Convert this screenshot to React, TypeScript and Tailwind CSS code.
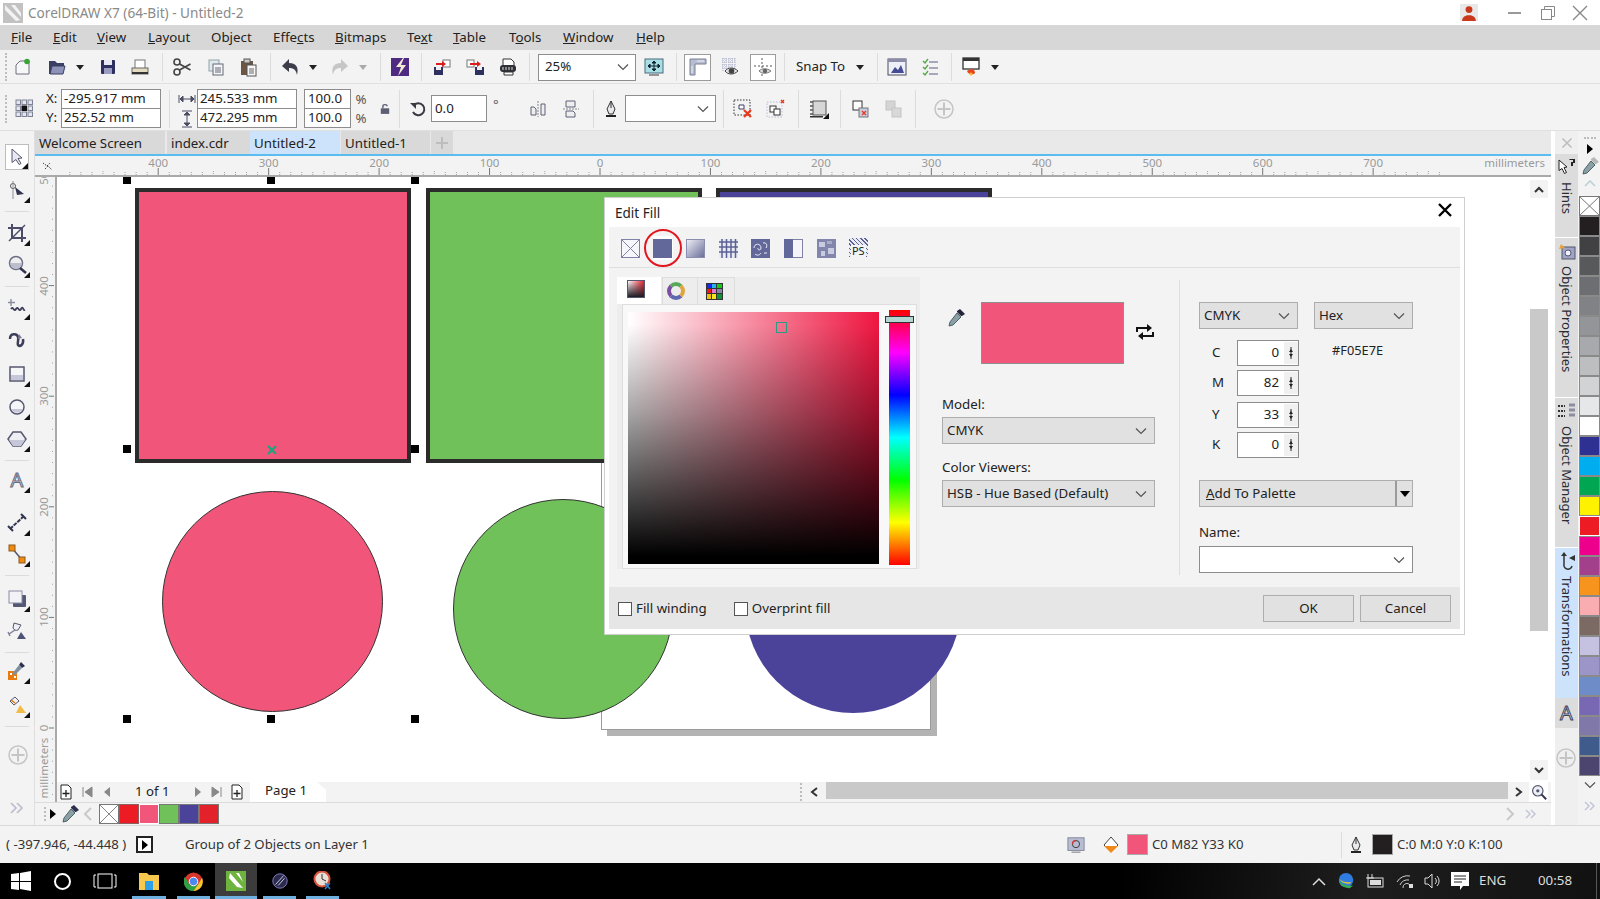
import type { ReactNode } from "react";

const Ico = ({ className = "", size = 20, children }: { className?: string; size?: number; children: ReactNode }) => (
  <svg width={size} height={size} viewBox="0 0 20 20" className={`shrink-0 ${className}`}>
    {children}
  </svg>
);

const Tri = ({ className = "" }: { className?: string }) => (
  <svg width="8" height="5" viewBox="0 0 8 5" className={`shrink-0 ${className}`}>
    <path d="M0 0h8L4 5z" fill="#222" />
  </svg>
);

const Sep = ({ className = "" }: { className?: string }) => <div className={`w-px shrink-0 bg-[#dcdcdc] ${className}`} />;

const Grip = () => <div className="ml-[5px] h-[28px] w-[2px] shrink-0 border-l-2 border-dotted border-[#bdbdbd]" />;

const Chevron = ({ className = "" }: { className?: string }) => (
  <svg width="12" height="8" viewBox="0 0 12 8" className={`shrink-0 ${className}`}>
    <path d="M1 1.5l5 5 5-5" fill="none" stroke="#555" strokeWidth="1.2" />
  </svg>
);

const Corner = () => (
  <svg width="6" height="6" viewBox="0 0 6 6" className="absolute bottom-0 right-0">
    <path d="M6 0v6H0z" fill="#111" />
  </svg>
);

// toolbar icons
const NewDoc = ({ className = "" }) => (
  <Ico className={className}>
    <path d="M4 8l4-4h9v13H4z" fill="#f7f7f7" stroke="#6d6f80" />
    <circle cx="15" cy="4.5" r="2.8" fill="#37a436" />
  </Ico>
);
const OpenIcon = ({ className = "" }) => (
  <Ico className={className}>
    <path d="M2 4h6l2 2h7v3H6l-2 8H2z" fill="#3a3f63" />
    <path d="M5 9h13l-2 8H3z" fill="#8d92b8" stroke="#3a3f63" />
  </Ico>
);
const SaveIcon = ({ className = "" }) => (
  <Ico className={className}>
    <rect x="3" y="3" width="14" height="14" rx="1" fill="#2e3160" />
    <rect x="6" y="3" width="8" height="5" fill="#e9e9f2" />
    <rect x="6" y="11" width="8" height="6" fill="#9a9cc2" />
  </Ico>
);
const PrintIcon = ({ className = "" }) => (
  <Ico className={className}>
    <rect x="5" y="3" width="10" height="9" fill="#fff" stroke="#777" />
    <rect x="2" y="11" width="16" height="6" fill="#e4dcc0" stroke="#666" />
    <rect x="2" y="15" width="16" height="2" fill="#333" />
  </Ico>
);
const Scissors = ({ className = "" }) => (
  <Ico className={className}>
    <circle cx="5" cy="5" r="3" fill="none" stroke="#444" strokeWidth="1.6" />
    <circle cx="5" cy="15" r="3" fill="none" stroke="#444" strokeWidth="1.6" />
    <path d="M7.5 7l11 6M7.5 13l11-6" stroke="#444" strokeWidth="1.6" />
  </Ico>
);
const CopyIcon = ({ className = "" }) => (
  <Ico className={className}>
    <rect x="3" y="3" width="10" height="11" fill="#e0e8ec" stroke="#8fa3a8" />
    <rect x="7" y="7" width="10" height="11" fill="#f5f5f5" stroke="#63697a" />
    <path d="M9 11h6M9 13h6M9 15h6" stroke="#63697a" />
  </Ico>
);
const PasteIcon = ({ className = "" }) => (
  <Ico className={className}>
    <rect x="3" y="4" width="12" height="14" fill="#6b5744" />
    <rect x="6" y="2" width="6" height="4" fill="#c9c9c9" stroke="#555" />
    <rect x="9" y="8" width="9" height="11" fill="#f7f7f7" stroke="#555" />
    <path d="M11 12h5M11 14h5M11 16h5" stroke="#666" />
  </Ico>
);
const UndoIcon = ({ className = "" }) => (
  <Ico className={className}>
    <path d="M8 2L1 9l7 6v-4c4 0 7 1 8 7 2-8-1-12-8-12z" fill="#3b3d4a" />
  </Ico>
);
const RedoIcon = ({ className = "" }) => (
  <Ico className={className}>
    <path d="M12 2l7 7-7 6v-4c-4 0-7 1-8 7-2-8 1-12 8-12z" fill="#c6c6c6" />
  </Ico>
);
const CorelIcon = ({ className = "" }) => (
  <Ico className={className}>
    <rect x="1" y="1" width="18" height="18" fill="#4f2a83" />
    <path d="M13 1L6 10h5l-3 9 8-11h-5l3-7z" fill="#f3ead2" />
  </Ico>
);
const ImportIcon = ({ className = "" }) => (
  <Ico className={className}>
    <rect x="11" y="3" width="7" height="7" fill="#fff" stroke="#777" />
    <rect x="2" y="10" width="9" height="8" fill="#2e3160" />
    <rect x="4" y="10" width="5" height="3" fill="#eee" />
    <path d="M4 6h6V4l4 3-4 3V8H4z" fill="#d81e1e" />
  </Ico>
);
const ExportIcon = ({ className = "" }) => (
  <Ico className={className}>
    <rect x="2" y="3" width="7" height="7" fill="#fff" stroke="#777" />
    <rect x="10" y="10" width="9" height="8" fill="#2e3160" />
    <rect x="12" y="10" width="5" height="3" fill="#eee" />
    <path d="M5 6h7V4l4 3-4 3V8H5z" fill="#d81e1e" />
  </Ico>
);
const PdfIcon = ({ className = "" }) => (
  <Ico className={className}>
    <path d="M5 2h8l3 3v4H5z" fill="#fff" stroke="#333" />
    <rect x="2" y="8" width="16" height="7" rx="3" fill="#2e3036" />
    <path d="M6 15h9v3H6z" fill="#fff" stroke="#333" />
    <path d="M5 10v3M8 10v3M11 10v3M14 10v3" stroke="#ddd" />
  </Ico>
);
const FitIcon = ({ className = "" }) => (
  <Ico className={className}>
    <rect x="1" y="2" width="18" height="14" fill="#a8dfe3" stroke="#4a6b80" />
    <path d="M10 4v10M4 9h12M10 4L8 6h4zM10 14l-2-2h4zM4 9l2-2v4zM16 9l-2-2v4z" stroke="#123" fill="#123" />
    <path d="M5 18h10" stroke="#777" strokeWidth="1.500" />
  </Ico>
);
const RulerIcon = () => (
  <Ico>
    <path d="M2 2h16v5H7v11H2z" fill="#b8bed2" stroke="#7a8094" />
    <path d="M9 4h7M4 9v7" stroke="#eee" />
  </Ico>
);
const GridEye = ({ className = "" }) => (
  <Ico className={className}>
    <path d="M2 2h14M2 5h14M2 8h14M2 11h14M3 1v13M6 1v13M9 1v13M12 1v13M15 1v13" stroke="#a9abc6" strokeDasharray="1 1" />
    <path d="M5 14c3-4 9-4 13 0-4 4-10 4-13 0z" fill="#e6e6e6" stroke="#444" />
    <circle cx="11.500" cy="14" r="2.800" fill="#444" />
  </Ico>
);
const GuideEye = () => (
  <Ico>
    <path d="M9 1v18M1 9h18" stroke="#555" strokeDasharray="2 2" />
    <path d="M6 14c3-3 8-3 12 0-4 3-9 3-12 0z" fill="#ddd" stroke="#777" />
    <circle cx="12" cy="14" r="2.200" fill="#666" />
  </Ico>
);
const OptionsIcon = ({ className = "" }) => (
  <Ico className={className}>
    <rect x="1" y="2" width="18" height="16" fill="#eef0f7" stroke="#4d4d63" />
    <rect x="1" y="2" width="18" height="3" fill="#8b8da8" />
    <path d="M4 16l4-6 3 3 3-5 3 8z" fill="#454b94" />
  </Ico>
);
const CheckList = ({ className = "" }) => (
  <Ico className={className}>
    <path d="M3 4l2 2 3-4M3 10l2 2 3-4M3 16l2 2 3-4" fill="none" stroke="#58a84a" strokeWidth="1.400" />
    <path d="M9 5h9M9 11h9M9 17h9" stroke="#8c8fa8" strokeWidth="1.300" />
  </Ico>
);
const PublishIcon = ({ className = "" }) => (
  <Ico className={className}>
    <rect x="2" y="1" width="16" height="11" fill="#fff" stroke="#333" strokeWidth="1.300" />
    <rect x="2" y="1" width="16" height="3" fill="#333" />
    <path d="M6 14c2-1 2-2 3-2l1 1 2-1c1 1 2 2 2 4-1 2-7 2-8-2z" fill="#e8461c" />
    <circle cx="10" cy="17" r="1.600" fill="#f6b73c" />
  </Ico>
);
const GridNine = ({ className = "" }) => (
  <Ico className={className}>
    {[3, 9, 15].map((x) =>
      [3, 9, 15].map((y) => (
        <rect key={`${x}-${y}`} x={x - 2} y={y - 2} width="4.500" height="4.500" fill={x === 9 && y === 9 ? "#111" : "#e3e4ee"} stroke={x === 9 && y === 9 ? "#111" : "#7f8195"} />
      ))
    )}
  </Ico>
);
const WidthIcon = () => (
  <Ico>
    <path d="M2 6v8M18 6v8M3 10h14M3 10l3-3v6zM17 10l-3-3v6z" stroke="#4a4c63" fill="#4a4c63" />
  </Ico>
);
const HeightIcon = () => (
  <Ico>
    <path d="M5 2h10M5 18h10M10 3v14M10 3L7 6h6zM10 17l-3-3h6z" stroke="#4a4c63" fill="#4a4c63" />
  </Ico>
);
const LockIcon = ({ className = "" }) => (
  <Ico size={14} className={className}>
    <rect x="4" y="9" width="12" height="8" fill="#5c5e72" />
    <path d="M7 9V6c0-3 6-3 6 0" fill="none" stroke="#5c5e72" strokeWidth="2" />
  </Ico>
);
const RotateIcon = ({ className = "" }) => (
  <Ico className={className}>
    <path d="M6 6a6 6 0 1 1-1 7" fill="none" stroke="#3a3a44" strokeWidth="2" />
    <path d="M2 4h6v6z" fill="#3a3a44" />
  </Ico>
);
const MirrorH = ({ className = "" }) => (
  <Ico className={className}>
    <path d="M10 2v16" stroke="#888" strokeDasharray="2 1" />
    <path d="M3 8h3l2 2v6H3zM17 5h-4v11h4z" fill="#eee" stroke="#5f6178" />
  </Ico>
);
const MirrorV = ({ className = "" }) => (
  <Ico className={className}>
    <path d="M2 10h16" stroke="#888" strokeDasharray="2 1" />
    <path d="M5 2h9v6H5zM5 12h7l2 2v4H5z" fill="#eee" stroke="#5f6178" />
  </Ico>
);
const PenIcon = ({ className = "" }) => (
  <Ico className={className}>
    <path d="M10 2l4 8-2 5H8l-2-5z" fill="#e8e8ef" stroke="#333" />
    <path d="M10 2v7" stroke="#333" />
    <rect x="5" y="16" width="10" height="2" fill="#222" />
  </Ico>
);
const RemoveClip = ({ className = "" }) => (
  <Ico className={className}>
    <rect x="1" y="1" width="16" height="15" fill="none" stroke="#333" strokeDasharray="1.500 1.500" />
    <path d="M6 6h5v4H6z" fill="#fff" stroke="#3c3f66" />
    <path d="M11 11l7 7M18 11l-7 7" stroke="#e8391d" strokeWidth="2.200" />
  </Ico>
);
const RemoveInner = ({ className = "" }) => (
  <Ico className={className}>
    <rect x="1" y="3" width="15" height="15" fill="none" stroke="#b9bcd2" strokeDasharray="1.500 1.500" />
    <rect x="4" y="7" width="6" height="6" fill="#fff" stroke="#333" />
    <rect x="8" y="10" width="6" height="6" fill="#fff" stroke="#333" />
    <path d="M15 1l3 3M18 1l-3 3" stroke="#e8391d" strokeWidth="1.500" />
  </Ico>
);
const WrapIcon = ({ className = "" }) => (
  <div className={`relative h-[20px] w-[20px] shrink-0 ${className}`}>
    <Ico>
      <path d="M1 3h4M1 7h4M1 11h4M1 15h4" stroke="#555" strokeWidth="1.400" />
      <rect x="4" y="2" width="13" height="14" fill="#d6d6d6" stroke="#555" />
      <rect x="1" y="17" width="13" height="1.500" fill="#333" />
    </Ico>
    <Corner />
  </div>
);
const OrderA = ({ className = "" }) => (
  <Ico className={className}>
    <rect x="2" y="2" width="9" height="9" fill="#fff" stroke="#333" />
    <rect x="8" y="9" width="9" height="9" fill="#c9cbe0" stroke="#777" />
    <path d="M11 12l4 4M15 12l-4 4" stroke="#e8391d" strokeWidth="1.300" />
  </Ico>
);
const OrderB = ({ className = "" }) => (
  <Ico className={className}>
    <rect x="2" y="2" width="9" height="9" fill="#d4d4d4" stroke="#c4c4c4" />
    <rect x="8" y="9" width="9" height="9" fill="#d8d8d8" stroke="#c4c4c4" />
  </Ico>
);
const PlusCircle = ({ className = "", size = 20 }) => (
  <Ico size={size} className={className}>
    <circle cx="10" cy="10" r="9" fill="none" stroke="#c5c5c5" strokeWidth="1.500" />
    <path d="M10 3.500v13M3.500 10h13" stroke="#c5c5c5" strokeWidth="2" />
  </Ico>
);
const DropperIcon = ({ className = "", color = "#2d2f4e" }) => (
  <Ico className={className}>
    <path d="M14 1l5 5-3 2-1 0-4-4 0-1z" fill={color} />
    <path d="M11 5l4 4-8 8-4 1 1-4z" fill="#8aa0a4" stroke="#4d6265" />
  </Ico>
);

// toolbox
const Tool = ({ children, corner = true }: { children: ReactNode; corner?: boolean }) => (
  <div className="relative mx-auto flex h-[26px] w-[26px] items-center justify-center">
    {children}
    {corner && <Corner />}
  </div>
);
const ToolSep = ({ className = "" }) => <div className={`mx-[5px] h-px bg-[#dcdcdc] ${className}`} />;

const Toolbox = () => (
  <div className="flex w-[35px] shrink-0 flex-col border-r border-[#dfdfdf] bg-[#f3f3f3] pt-[13px]">
    <div className="relative mx-[5px] flex h-[26px] items-center justify-center border border-[#bdbdbd] bg-white">
      <svg width="18" height="18" viewBox="0 0 18 18">
        <path d="M4 1l10 9-4 .5 3 5-2 1-3-5-4 3z" fill="#e8e9f2" stroke="#55576e" />
      </svg>
      <Corner />
    </div>
    <div className="mt-[7px]">
      <Tool>
        <Ico>
          <circle cx="6" cy="6" r="2.500" fill="#fff" stroke="#555" />
          <path d="M6 1v18" stroke="#8b8da0" />
          <path d="M8 7l9 7-7 1z" fill="#33344f" />
        </Ico>
      </Tool>
    </div>
    <ToolSep className="mt-[8px]" />
    <div className="mt-[8px]">
      <Tool>
        <Ico>
          <path d="M5 1v14h14M1 5h14v14" fill="none" stroke="#4a4c68" strokeWidth="2" />
          <path d="M2 18L18 2" stroke="#4a4c68" strokeWidth="1.500" />
        </Ico>
      </Tool>
    </div>
    <div className="mt-[6px]">
      <Tool>
        <Ico>
          <circle cx="9" cy="8" r="6.500" fill="#eee" stroke="#6c6f84" strokeWidth="1.500" />
          <path d="M3 8h12a6 6 0 0 1-12 0z" fill="#bcbecd" />
          <path d="M13 13l6 5" stroke="#33344f" strokeWidth="2.500" />
        </Ico>
      </Tool>
    </div>
    <ToolSep className="mt-[8px]" />
    <div className="mt-[7px]">
      <Tool>
        <Ico>
          <path d="M4 2v7M1 5.500h7" stroke="#8b8da0" strokeWidth="1.400" />
          <path d="M4 12c2-4 3 4 5 0s3 4 5 0 2 2 4 1" fill="none" stroke="#3d3f5a" strokeWidth="1.800" />
        </Ico>
      </Tool>
    </div>
    <div className="mt-[7px]">
      <Tool corner={false}>
        <Ico>
          <path d="M3 9c0-6 7-6 8-2 1 3-1 6 0 8 2 2 6 0 5-6" fill="none" stroke="#3d3f5a" strokeWidth="2.500" />
          <path d="M12 4l3 4-4 1z" fill="#7d7f95" />
        </Ico>
      </Tool>
    </div>
    <div className="mt-[8px]">
      <Tool>
        <Ico>
          <rect x="3" y="3" width="14" height="14" fill="#f5f5f8" stroke="#55576e" strokeWidth="1.500" />
          <rect x="4" y="11" width="12" height="5" fill="#c6c8da" />
        </Ico>
      </Tool>
    </div>
    <div className="mt-[7px]">
      <Tool>
        <Ico>
          <circle cx="10" cy="10" r="7" fill="#f5f5f8" stroke="#55576e" strokeWidth="1.500" />
          <path d="M4 12h12a7 7 0 0 1-12 0z" fill="#c6c8da" />
        </Ico>
      </Tool>
    </div>
    <div className="mt-[6px]">
      <Tool>
        <Ico>
          <path d="M6 3h8l5 7-5 7H6l-5-7z" fill="#eceef4" stroke="#55576e" strokeWidth="1.500" />
          <path d="M2 11h16l-4 6H6z" fill="#c6c8da" />
        </Ico>
      </Tool>
    </div>
    <ToolSep className="mt-[8px]" />
    <div className="mt-[6px]">
      <Tool>
        <span className="text-[20px] leading-none text-[#d8dae6] [-webkit-text-stroke:1px_#6a6c84]">A</span>
      </Tool>
    </div>
    <div className="mt-[17px]">
      <Tool>
        <Ico>
          <path d="M3 16L17 3" stroke="#33344f" strokeWidth="2" strokeDasharray="4 1" />
          <path d="M1 13l5 5M14 1l5 5" stroke="#33344f" strokeWidth="2" />
        </Ico>
      </Tool>
    </div>
    <div className="mt-[5px]">
      <Tool>
        <Ico>
          <path d="M5 4l10 12" stroke="#55576e" strokeWidth="1.500" />
          <rect x="2" y="1" width="6" height="6" fill="#f28a12" stroke="#8a5b1b" />
          <rect x="12" y="13" width="6" height="6" fill="#f28a12" stroke="#8a5b1b" />
        </Ico>
      </Tool>
    </div>
    <ToolSep className="mt-[8px]" />
    <div className="mt-[10px]">
      <Tool>
        <Ico>
          <rect x="6" y="6" width="13" height="12" rx="1" fill="#555872" />
          <rect x="2" y="2" width="13" height="12" fill="#f3f3f7" stroke="#8a8ca3" />
        </Ico>
      </Tool>
    </div>
    <div className="mt-[6px]">
      <Tool corner={false}>
        <Ico>
          <path d="M7 2l7 2-3 5c-2 1-4 0-5-2z" fill="#eef0f5" stroke="#55576e" />
          <path d="M8 9l-6 4M1 11l2 4" stroke="#7d7f95" strokeWidth="1.400" />
          <path d="M14 11l5 7H10z" fill="#4e5478" />
        </Ico>
      </Tool>
    </div>
    <ToolSep className="mt-[8px]" />
    <div className="mt-[5px]">
      <Tool>
        <Ico>
          <rect x="1" y="10" width="9" height="9" fill="#e87a10" />
          <path d="M3 12h2v2H3zM7 15h2v2H7z" fill="#fff" />
          <path d="M14 1l4 4-3 2-3-3z" fill="#2d2f4e" />
          <path d="M12 4l3 3-7 7-3-1z" fill="#7f8ea0" />
        </Ico>
      </Tool>
    </div>
    <div className="mt-[8px]">
      <Tool>
        <Ico>
          <path d="M3 6l5-4 4 4-5 4z" fill="#f2f2f6" stroke="#55576e" />
          <path d="M4 5l4 3" stroke="#d97706" strokeWidth="1.500" />
          <path d="M13 10l6 8H9z" fill="#f3bb45" />
        </Ico>
      </Tool>
    </div>
    <ToolSep className="mt-[8px]" />
    <PlusCircle className="ml-[8px] mt-[18px]" />
    <svg width="14" height="12" viewBox="0 0 14 12" className="ml-[10px] mt-[37px]">
      <path d="M1 1l5 5-5 5M7 1l5 5-5 5" fill="none" stroke="#b9bcce" strokeWidth="1.600" />
    </svg>
  </div>
);

// rulers
const hLabels = [
  { t: "400", v: -400 },
  { t: "300", v: -300 },
  { t: "200", v: -200 },
  { t: "100", v: -100 },
  { t: "0", v: 0 },
  { t: "100", v: 100 },
  { t: "200", v: 200 },
  { t: "300", v: 300 },
  { t: "400", v: 400 },
  { t: "500", v: 500 },
  { t: "600", v: 600 },
  { t: "700", v: 700 },
];
const hTicks = Array.from({ length: 125 }, (_, i) => -480 + i * 10);

const TopRuler = () => (
  <div className="relative h-[21px] shrink-0 overflow-hidden border-b-2 border-[#a9a9a9] bg-[#f3f3f3]">
    <svg width="1516" height="21" className="absolute left-0 top-0">
      {hTicks.map((v) => {
        const x = 565 + v * 1.1045;
        const major = v % 100 === 0;
        const mid = v % 50 === 0;
        return <line key={v} x1={x} x2={x} y1={major ? 12 : mid ? 15 : 16} y2={19} stroke={major ? "#777" : "#a5a5a5"} strokeDasharray={major ? undefined : "1 1"} />;
      })}
      <path d="M8 7l4 3 3-3M10 13l3-3 4 4" fill="none" stroke="#444" strokeDasharray="1.500 1" />
    </svg>
    {hLabels.map((l) => (
      <span key={l.v} className="absolute top-[-1px] -translate-x-1/2 text-[11.5px] leading-[16px] text-[#9a9a9a]" style={{ left: 565 + l.v * 1.1045 }}>
        {l.t}
      </span>
    ))}
    <span className="absolute right-[6px] top-[-1px] text-[11.5px] leading-[16px] text-[#9a9a9a]">millimeters</span>
  </div>
);

const vLabels = [
  { t: "500", v: 500 },
  { t: "400", v: 400 },
  { t: "300", v: 300 },
  { t: "200", v: 200 },
  { t: "100", v: 100 },
  { t: "0", v: 0 },
];
const vTicks = Array.from({ length: 62 }, (_, i) => -60 + i * 10);

const LeftRuler = () => (
  <div className="relative w-[22px] shrink-0 overflow-hidden border-r-2 border-[#a9a9a9] bg-[#f3f3f3]">
    <svg width="22" height="625" className="absolute left-0 top-0">
      {vTicks.map((v) => {
        const y = 551 - v * 1.106;
        const major = v % 100 === 0;
        return <line key={v} x1={major ? 14 : 17} x2={19} y1={y} y2={y} stroke={major ? "#777" : "#a5a5a5"} strokeDasharray={major ? undefined : "1 1"} />;
      })}
    </svg>
    {vLabels.map((l) => (
      <span key={l.v} className="absolute left-[9px] -translate-x-1/2 -translate-y-1/2 -rotate-90 text-[11.500px] leading-none text-[#9a9a9a]" style={{ top: 551 - l.v * 1.106 }}>
        {l.t}
      </span>
    ))}
    <span className="absolute left-[9px] top-[591px] -translate-x-1/2 -translate-y-1/2 -rotate-90 text-[11.500px] leading-none text-[#9a9a9a]">millimeters</span>
  </div>
);

// canvas items
const Handle = ({ className }: { className: string }) => <div className={`absolute h-[8px] w-[8px] bg-black ${className}`} />;

const Canvas = () => (
  <div className="relative min-w-0 flex-1 overflow-hidden bg-white">
    <div className="absolute left-[544px] top-[123px] h-[430px] w-[330px] border border-[#9a9a9a] bg-white shadow-[6px_6px_0_#b3b3b3]" />
    <div className="absolute left-[78px] top-[11px] h-[275px] w-[276px] border-[4px] border-[#2b2b2b] bg-[#f1567a]" />
    <div className="absolute left-[369px] top-[11px] h-[275px] w-[276px] border-[4px] border-[#2b2b2b] bg-[#71c15a]" />
    <div className="absolute left-[659px] top-[11px] h-[275px] w-[276px] border-[4px] border-[#2b2b2b] bg-[#4b429a]" />
    <div className="absolute left-[105px] top-[314px] h-[221px] w-[221px] rounded-full border border-[#333] bg-[#f1567a]" />
    <div className="absolute left-[396px] top-[322px] h-[220px] w-[220px] rounded-full border border-[#333] bg-[#71c15a]" />
    <div className="absolute left-[688px] top-[320px] h-[216px] w-[216px] rounded-full bg-[#4b429a]" />
    <Handle className="left-[66px] top-[-1px]" />
    <Handle className="left-[210px] top-[-1px]" />
    <Handle className="left-[354px] top-[-1px]" />
    <Handle className="left-[66px] top-[268px]" />
    <Handle className="left-[354px] top-[268px]" />
    <Handle className="left-[66px] top-[538px]" />
    <Handle className="left-[210px] top-[538px]" />
    <Handle className="left-[354px] top-[538px]" />
    <svg width="10" height="10" viewBox="0 0 10 10" className="absolute left-[210px] top-[268px]">
      <path d="M1 1l8 8M9 1l-8 8" stroke="#16a77e" strokeWidth="2" />
    </svg>
  </div>
);

const VScroll = () => (
  <div className="flex w-[21px] shrink-0 flex-col bg-white">
    <div className="mt-[3px] flex h-[18px] w-[18px] items-center justify-center bg-[#f3f3f3]">
      <svg width="10" height="7" viewBox="0 0 10 7"><path d="M1 6l4-4 4 4" fill="none" stroke="#333" strokeWidth="2" /></svg>
    </div>
    <div className="mt-[111px] h-[322px] w-[18px] bg-[#c9c9c9]" />
    <div className="mt-[129px] flex h-[20px] w-[18px] items-center justify-center bg-[#f3f3f3]">
      <svg width="10" height="7" viewBox="0 0 10 7"><path d="M1 1l4 4 4-4" fill="none" stroke="#333" strokeWidth="2" /></svg>
    </div>
  </div>
);

const PageGlyph = ({ className = "" }: { className?: string }) => (
  <svg width="14" height="16" viewBox="0 0 14 16" className={`shrink-0 ${className}`}>
    <path d="M2 1h7l3 3v11H2z" fill="#fff" stroke="#222" />
    <path d="M7 6v7M3.500 9.500h7" stroke="#222" strokeWidth="1.300" />
  </svg>
);

const NavRow = () => (
  <div className="flex h-[20px] shrink-0 items-center bg-[#f3f3f3]">
    <PageGlyph className="ml-[2px]" />
    <svg width="12" height="12" viewBox="0 0 12 12" className="ml-[8px] shrink-0"><path d="M2 1v10M11 1v10L4 6z" fill="#888" stroke="#888" /></svg>
    <svg width="12" height="12" viewBox="0 0 12 12" className="ml-[8px] shrink-0"><path d="M9 1v10L3 6z" fill="#888" /></svg>
    <span className="ml-[22px] w-[33px] shrink-0 whitespace-nowrap text-[13.2px] leading-none text-[#222]">1 of 1</span>
    <svg width="12" height="12" viewBox="0 0 12 12" className="ml-[24px] shrink-0"><path d="M3 1v10l6-5z" fill="#888" /></svg>
    <svg width="12" height="12" viewBox="0 0 12 12" className="ml-[7px] shrink-0"><path d="M10 1v10M1 1v10l7-5z" fill="#888" stroke="#888" /></svg>
    <PageGlyph className="ml-[7px]" />
    <div className="ml-[6px] flex h-[20px] w-[76px] shrink-0 items-center justify-center bg-white pb-[3px] pr-[4px] text-[13.2px] text-[#222] [clip-path:polygon(0_0,88%_0,100%_40%,100%_100%,0_100%)]">Page 1</div>
    <div className="flex-1" />
    <div className="h-[18px] w-[2px] shrink-0 border-l-2 border-dotted border-[#bdbdbd]" />
    <svg width="10" height="12" viewBox="0 0 10 12" className="ml-[8px] shrink-0"><path d="M7 2L2 6l5 4" fill="none" stroke="#333" strokeWidth="2" /></svg>
    <div className="ml-[6px] h-[17px] w-[682px] shrink-0 self-start bg-[#c9c9c9]" />
    <svg width="10" height="12" viewBox="0 0 10 12" className="ml-[5px] shrink-0"><path d="M3 2l5 4-5 4" fill="none" stroke="#333" strokeWidth="2" /></svg>
    <div className="ml-[6px] mr-[3px] flex h-[20px] w-[19px] shrink-0 items-center justify-center bg-white">
      <Ico size={16}>
        <circle cx="8.500" cy="8.500" r="6.500" fill="#eef0f7" stroke="#55576e" strokeWidth="1.500" />
        <circle cx="8.500" cy="8.500" r="2" fill="#55576e" />
        <path d="M13 13l6 6" stroke="#33344f" strokeWidth="2.500" />
      </Ico>
    </div>
  </div>
);

const PaletteStrip = () => (
  <div className="flex h-[23px] shrink-0 items-center border-t border-[#dcdcdc] bg-[#f3f3f3]">
    <div className="ml-[9px] h-[14px] w-[2px] shrink-0 border-l-2 border-dotted border-[#bdbdbd]" />
    <svg width="8" height="12" viewBox="0 0 8 12" className="ml-[3px] shrink-0"><path d="M1 1v10l6-5z" fill="#000" /></svg>
    <DropperIcon className="ml-[3px]" />
    <svg width="10" height="14" viewBox="0 0 10 14" className="ml-[3px] shrink-0"><path d="M8 1L2 7l6 6" fill="none" stroke="#c9c9c9" strokeWidth="2" /></svg>
    <div className="ml-[6px] flex">
      <svg width="20" height="20" viewBox="0 0 20 20" className="border border-[#777] bg-white"><path d="M0 0l20 20M20 0L0 20" stroke="#777" /></svg>
      <div className="h-[20px] w-[20px] border border-[#8b6060] bg-[#ed1c24]" />
      <div className="h-[20px] w-[20px] border border-white bg-[#f1567a]" />
      <div className="h-[20px] w-[20px] border border-[#777] bg-[#71c15a]" />
      <div className="h-[20px] w-[20px] border border-[#777] bg-[#4b429a]" />
      <div className="h-[20px] w-[20px] border border-[#777] bg-[#e3212b]" />
    </div>
    <div className="flex-1" />
    <svg width="10" height="14" viewBox="0 0 10 14" className="mr-[10px] shrink-0"><path d="M2 1l6 6-6 6" fill="none" stroke="#c9c9c9" strokeWidth="2" /></svg>
    <svg width="12" height="10" viewBox="0 0 12 10" className="mr-[14px] shrink-0"><path d="M1 1l4 4-4 4M6 1l4 4-4 4" fill="none" stroke="#c4c6d6" strokeWidth="1.500" /></svg>
  </div>
);

// dockers on the right
const DockTab = ({ label, className, icon }: { label: string; className: string; icon: ReactNode }) => (
  <div className={`flex flex-col items-center pt-[3px] ${className}`}>
    {icon}
    <span className="mt-[5px] whitespace-nowrap text-[13px] leading-[22px] text-[#2b2b33] [writing-mode:vertical-rl]">{label}</span>
  </div>
);

const Dockers = () => (
  <div className="flex w-[23px] shrink-0 flex-col bg-[#efefef]">
    <div className="flex h-[23px] shrink-0 items-center justify-center">
      <svg width="12" height="12" viewBox="0 0 12 12"><path d="M1.500 1.500l9 9M10.500 1.500l-9 9" stroke="#bcbcbc" strokeWidth="1.500" /></svg>
    </div>
    <DockTab
      label="Hints"
      className="h-[84px] border-b border-white bg-[#dcdcdc]"
      icon={
        <Ico size={20}>
          <path d="M2 3l8 7-3 .5 2.500 5-2 1-2.500-5-3 2z" fill="#fff" stroke="#222" />
          <path d="M12 2h6v4h-2v3h-2V5h2V3h-3z" fill="#222" />
        </Ico>
      }
    />
    <DockTab
      label="Object Properties"
      className="h-[160px] border-b border-white bg-[#dcdcdc]"
      icon={
        <Ico size={20}>
          <rect x="5" y="6" width="13" height="12" fill="#9fa3c4" stroke="#55576e" />
          <path d="M4 3l4 4-6 1z" fill="#e8a23a" />
          <circle cx="11" cy="12" r="3" fill="#eef" stroke="#55576e" />
        </Ico>
      }
    />
    <DockTab
      label="Object Manager"
      className="h-[150px] border-b border-white bg-[#dcdcdc]"
      icon={
        <Ico size={20}>
          <path d="M1 5h7M1 10h7M1 15h7" stroke="#333" strokeDasharray="2 1" strokeWidth="2" />
          <path d="M12 4h6M12 9h6M12 14h6" stroke="#8b8da0" strokeWidth="3" />
        </Ico>
      }
    />
    <DockTab
      label="Transformations"
      className="h-[150px] bg-[#cde3fb]"
      icon={
        <Ico size={20}>
          <path d="M7 5v8a4 4 0 0 0 8 2" fill="none" stroke="#333" strokeWidth="1.500" />
          <path d="M7 1l3 4H4zM12 7l6-3v6z" fill="#333" />
        </Ico>
      }
    />
    <div className="flex h-[30px] shrink-0 items-center justify-center bg-[#dcdcdc]">
      <span className="text-[20px] leading-none text-[#eef0f6] [-webkit-text-stroke:1px_#44465c]">A</span>
    </div>
    <PlusCircle className="ml-[1px] mt-[20px]" />
  </div>
);

const swatches = [
  "bg-[#231f20]", "bg-[#414042]", "bg-[#58595b]", "bg-[#6d6e71]", "bg-[#808285]", "bg-[#939598]", "bg-[#a7a9ac]", "bg-[#bcbec0]", "bg-[#d1d3d4]", "bg-[#e6e7e8]", "bg-[#ffffff]",
  "bg-[#2e3192]", "bg-[#00aeef]", "bg-[#00a651]", "bg-[#fff200]", "bg-[#ed1c24] border-white", "bg-[#ec008c]", "bg-[#a3408b]", "bg-[#f7941d]", "bg-[#f9adb0]", "bg-[#7b6a63]",
  "bg-[#c5c1e0]", "bg-[#9c96c8]", "bg-[#6d8cc8]", "bg-[#7868b4]", "bg-[#8078a8]", "bg-[#3f5b8c]", "bg-[#4b4570]",
];

const Palette = () => (
  <div className="ml-px flex w-[21px] shrink-0 flex-col items-center bg-[#f3f3f3]">
    <div className="mt-[6px] h-[2px] w-[12px] border-t-2 border-dotted border-[#bdbdbd]" />
    <svg width="8" height="12" viewBox="0 0 8 12" className="mt-[4px]"><path d="M1 1v10l6-5z" fill="#000" /></svg>
    <DropperIcon className="mt-[1px]" color="#b8b8b8" />
    <svg width="12" height="8" viewBox="0 0 12 8" className="mt-[3px]"><path d="M1 7l5-5 5 5" fill="none" stroke="#bcd3d6" strokeWidth="1.600" /></svg>
    <div className="mt-[9px] w-full">
      <svg width="21" height="20" viewBox="0 0 21 20" className="block border border-[#777] bg-white"><path d="M0 0l21 20M21 0L0 20" stroke="#666" /></svg>
      {swatches.map((c) => (
        <div key={c} className={`h-[20px] w-full border border-[#8a8a8a] ${c}`} />
      ))}
    </div>
    <Chevron className="mt-[5px]" />
    <svg width="12" height="10" viewBox="0 0 12 10" className="mt-[12px]"><path d="M1 1l4 4-4 4M6 1l4 4-4 4" fill="none" stroke="#c4c6d6" strokeWidth="1.500" /></svg>
  </div>
);

// Edit Fill dialog
const Select = ({ value, className }: { value: string; className: string }) => (
  <div className={`flex h-[27px] shrink-0 items-center justify-between border border-[#adadad] bg-[#e1e1e1] pl-[4px] pr-[7px] text-[13.3px] text-[#222] ${className}`}>
    <span className="whitespace-nowrap">{value}</span>
    <Chevron />
  </div>
);

const Spin = ({ label, value, className }: { label: string; value: string; className: string }) => (
  <div className={`flex h-[26px] items-center ${className}`}>
    <span className="w-[38px] pl-[13px] text-[13.3px] text-[#222]">{label}</span>
    <div className="flex h-[26px] w-[62px] items-center justify-end border border-[#8d8d8d] bg-white">
      <span className="text-[13.3px] text-[#222]">{value}</span>
      <div className="ml-[5px] flex h-[22px] w-[14px] items-center justify-center bg-[#f0f0f0]">
        <svg width="6" height="14" viewBox="0 0 6 14">
          <path d="M3 1v12" stroke="#222" />
          <path d="M1 6l2-3 2 3zM1 8l2 3 2-3z" fill="#222" />
        </svg>
      </div>
    </div>
  </div>
);

const FillBtn = ({ children, active = false }: { children: ReactNode; active?: boolean }) => (
  <div className={`flex h-[24px] w-[20px] items-center justify-center ${active ? "relative bg-white" : ""}`}>{children}</div>
);

const Check = ({ label, className = "" }: { label: string; className?: string }) => (
  <div className={`flex items-center ${className}`}>
    <div className="h-[14px] w-[14px] border border-[#555] bg-white" />
    <span className="ml-[4px] whitespace-nowrap text-[13.3px] text-[#222]">{label}</span>
  </div>
);

const FootBtn = ({ label, className = "" }: { label: string; className?: string }) => (
  <div className={`flex h-[27px] w-[91px] items-center justify-center border border-[#adadad] bg-[#e1e1e1] text-[13.3px] text-[#222] ${className}`}>{label}</div>
);

const EditFill = () => (
  <div className="absolute left-[604px] top-[197px] flex h-[438px] w-[861px] flex-col border border-[#cfcfcf] bg-white">
    <div className="relative flex h-[29px] shrink-0 items-center pl-[10px] pt-px text-[13.5px] text-[#222]">
      Edit Fill
      <svg width="16" height="16" viewBox="0 0 16 16" className="absolute right-[11px] top-[4px]">
        <path d="M2 2l12 12M14 2L2 14" stroke="#000" strokeWidth="2.400" />
      </svg>
    </div>
    <div className="mx-[4px] mb-[5px] flex flex-1 flex-col bg-[#f3f3f3]">
      {/* fill type buttons */}
      <div className="relative flex h-[41px] shrink-0 items-start gap-[12.700px] border-b border-[#dedede] pl-[11px] pt-[9px]">
        <FillBtn>
          <svg width="19" height="19" viewBox="0 0 19 19"><rect x=".5" y=".5" width="18" height="18" fill="#f6f6fb" stroke="#7f82a6" /><path d="M1 1l17 17M18 1L1 18" stroke="#7f82a6" /></svg>
        </FillBtn>
        <FillBtn active>
          <svg width="19" height="19" viewBox="0 0 19 19"><rect width="19" height="19" fill="#62689a" /></svg>
          <div className="absolute left-[-9px] top-[-7px] h-[38px] w-[38px] rounded-full border-2 border-[#e2161f]" />
        </FillBtn>
        <FillBtn>
          <div className="h-[19px] w-[19px] border border-[#8b8eaf] bg-[linear-gradient(135deg,#ecedf5,#6b7099)]" />
        </FillBtn>
        <FillBtn>
          <svg width="19" height="19" viewBox="0 0 19 19"><rect width="19" height="19" fill="#e9eaf3" /><path d="M3 0v19M7.500 0v19M12 0v19M16.500 0v19M0 3h19M0 8h19M0 13h19" stroke="#5d6294" strokeWidth="1.500" /></svg>
        </FillBtn>
        <FillBtn>
          <svg width="19" height="19" viewBox="0 0 19 19"><rect width="19" height="19" fill="#62689a" /><path d="M3 9c0-5 7-5 7 0 0 3-4 2-3 0M12 4c3-1 5 2 3 5M4 15c2 2 5 1 6-1M13 14h3" fill="none" stroke="#eceef6" /></svg>
        </FillBtn>
        <FillBtn>
          <svg width="19" height="19" viewBox="0 0 19 19"><rect x=".5" y=".5" width="18" height="18" fill="#f4f4f9" stroke="#7f82a6" /><rect width="9" height="19" fill="#62689a" /></svg>
        </FillBtn>
        <FillBtn>
          <svg width="19" height="19" viewBox="0 0 19 19"><rect width="19" height="19" fill="#8286ac" /><path d="M2 3h6v5H2zM11 9h6v6h-6zM4 12h4v5H4z" fill="#c9cbe0" /><path d="M10 2h5v3h-5z" fill="#a9acc8" /></svg>
        </FillBtn>
        <div className="relative mt-[2px] flex h-[19px] w-[19px] items-end justify-center bg-[repeating-linear-gradient(45deg,#5d6294_0,#5d6294_1px,#e9eaf3_1px,#e9eaf3_3px)]">
          <span className="bg-[#f3f3f3] px-[1px] text-[11px] leading-[12px] text-[#222]">PS</span>
        </div>
      </div>
      <div className="flex min-h-0 flex-1 items-start pt-[9px]">
        {/* picker */}
        <div className="ml-[8px] h-[292px] w-[303px] shrink-0 bg-[#ededed]">
          <div className="flex h-[27px] items-end">
            <div className="flex h-[27px] w-[44px] items-center justify-center bg-white pb-[4px] pr-[6px]">
              <div className="h-[16px] w-[16px] bg-[linear-gradient(to_bottom,transparent,#1c1c24),linear-gradient(to_right,#fff,#e9252f)] shadow-[0_0_0_1px_#55576e]" />
            </div>
            <div className="ml-[1px] flex h-[27px] w-[36px] items-center justify-center border-l border-r border-t border-[#dedede] pr-[8px]">
              <div className="h-[18px] w-[18px] rounded-full border-[4px] border-b-[#6068b0] border-l-[#7a4fa0] border-r-[#e0a53c] border-t-[#5aa85a]" />
            </div>
            <div className="flex h-[27px] w-[37px] items-center justify-center border-r border-t border-[#dedede] pr-[4px]">
              <div className="grid h-[17px] w-[17px] grid-cols-3 gap-px bg-[#333] p-px">
                <div className="bg-[#1a2ae8]" /><div className="bg-[#28b4f0]" /><div className="bg-[#18c818]" />
                <div className="bg-[#e81a1a]" /><div className="bg-[#e078d8]" /><div className="bg-[#8888a8]" />
                <div className="bg-[#f0c010]" /><div className="bg-[#f0e818]" /><div className="bg-[#109038]" />
              </div>
            </div>
          </div>
          <div className="relative ml-[5px] h-[265px] w-[295px] border border-[#dedede] bg-[#f8f8f8]">
            <div className="absolute left-[5px] top-[7px] h-[252px] w-[251px] bg-[linear-gradient(to_bottom,transparent_5%,rgba(0,0,0,.35)_40%,rgba(0,0,0,.75)_75%,#000_97%),linear-gradient(to_right,#fff,#ee1540)]" />
            <div className="absolute left-[153px] top-[17px] h-[11px] w-[11px] border border-[#2e9a86]" />
            <div className="absolute left-[266px] top-[5px] h-[255px] w-[21px] bg-[linear-gradient(to_bottom,#f00,#f0f,#00f,#0ff,#0f0,#ff0,#f00)]" />
            <div className="absolute left-[262px] top-[11px] h-[7px] w-[29px] border border-[#333] bg-[#b5d6d0]" />
          </div>
        </div>
        {/* middle column */}
        <div className="ml-[22px] w-[213px] shrink-0 pt-[25px]">
          <div className="flex items-center">
            <DropperIcon className="ml-[4px] mt-[-30px]" color="#23253b" />
            <div className="ml-[15px] h-[62px] w-[143px] shrink-0 border border-[#8f8f8f] bg-[#f1567a]" />
            <svg width="18" height="16" viewBox="0 0 18 16" className="ml-[12px] mt-[-2px] shrink-0">
              <path d="M1 8V4h11" fill="none" stroke="#111" strokeWidth="2" />
              <path d="M11 0l5 4-5 4z" fill="#111" />
              <path d="M17 8v4H6" fill="none" stroke="#111" strokeWidth="2" />
              <path d="M7 8l-5 4 5 4z" fill="#111" />
            </svg>
          </div>
          <div className="mt-[30px] h-[20px] text-[13.3px] leading-[20px] text-[#222]">Model:</div>
          <Select value="CMYK" className="mt-[3px] w-[213px]" />
          <div className="mt-[13px] h-[20px] text-[13.3px] leading-[20px] text-[#222]">Color Viewers:</div>
          <Select value="HSB - Hue Based (Default)" className="mt-[3px] w-[213px]" />
        </div>
        <div className="ml-[24px] mt-[3px] h-[295px] w-px shrink-0 bg-[#dedede]" />
        {/* right column */}
        <div className="ml-[19px] w-[214px] shrink-0 pt-[25px]">
          <div className="flex gap-[16px]">
            <Select value="CMYK" className="w-[99px]" />
            <Select value="Hex" className="w-[99px]" />
          </div>
          <div className="relative">
            <Spin label="C" value="0" className="mt-[11px]" />
            <Spin label="M" value="82" className="mt-[4px]" />
            <Spin label="Y" value="33" className="mt-[6px]" />
            <Spin label="K" value="0" className="mt-[4px]" />
            <span className="absolute left-[133px] top-[1px] text-[12.8px] text-[#222]">#F05E7E</span>
          </div>
          <div className="mt-[22px] flex h-[27px] w-[214px] border border-[#adadad] bg-[#e1e1e1]">
            <div className="flex flex-1 items-center pl-[6px] text-[13.3px] text-[#222]">
              <span><span className="underline">A</span>dd To Palette</span>
            </div>
            <div className="flex w-[17px] items-center justify-center border-l-2 border-[#9b9b9b]">
              <svg width="10" height="6" viewBox="0 0 10 6"><path d="M0 0h10L5 6z" fill="#000" /></svg>
            </div>
          </div>
          <div className="mt-[15px] h-[20px] text-[13.3px] leading-[20px] text-[#222]">Name:</div>
          <div className="mt-[4px] flex h-[27px] items-center justify-end border border-[#8d8d8d] bg-white pr-[7px]">
            <Chevron />
          </div>
        </div>
      </div>
      <div className="flex h-[42px] shrink-0 items-center bg-[#e6e6e6] pl-[9px] pt-px">
        <Check label="Fill winding" />
        <Check label="Overprint fill" className="ml-[27px]" />
        <FootBtn label="OK" className="ml-auto" />
        <FootBtn label="Cancel" className="ml-[6px] mr-[9px]" />
      </div>
    </div>
  </div>
);

const menus = [
  { w: "w-[42px]", a: "", u: "F", b: "ile" },
  { w: "w-[44px]", a: "", u: "E", b: "dit" },
  { w: "w-[51px]", a: "", u: "V", b: "iew" },
  { w: "w-[63px]", a: "", u: "L", b: "ayout" },
  { w: "w-[62px]", a: "Ob", u: "j", b: "ect" },
  { w: "w-[62px]", a: "Effe", u: "c", b: "ts" },
  { w: "w-[72px]", a: "", u: "B", b: "itmaps" },
  { w: "w-[46px]", a: "Te", u: "x", b: "t" },
  { w: "w-[56px]", a: "", u: "T", b: "able" },
  { w: "w-[54px]", a: "T", u: "o", b: "ols" },
  { w: "w-[73px]", a: "", u: "W", b: "indow" },
  { w: "w-[40px]", a: "", u: "H", b: "elp" },
];

const tabs = [
  { label: "Welcome Screen", cls: "w-[130px] bg-[#d9d9d9]" },
  { label: "index.cdr", cls: "ml-[2px] w-[83px] bg-[#d9d9d9]" },
  { label: "Untitled-2", cls: "w-[90px] bg-[#cde3fb]" },
  { label: "Untitled-1", cls: "ml-px w-[89px] bg-[#d9d9d9]" },
];

export default function App() {
  return (
    <div className="relative flex h-[899px] w-[1600px] flex-col overflow-hidden bg-[#f3f3f3] font-['Noto_Sans','Open_Sans',sans-serif] text-[#222]">
      {/* title bar */}
      <div className="flex h-[25px] shrink-0 items-center bg-white">
        <svg width="20" height="20" viewBox="0 0 20 20" className="ml-[3px] shrink-0">
          <rect width="20" height="20" fill="#c2c2c2" />
          <path d="M2 2l15 15-4 1L2 7zM8 2h4l6 8v4z" fill="#f3f3f3" />
        </svg>
        <span className="ml-[5px] mt-[2px] whitespace-nowrap text-[13.6px] text-[#8a8a8a]">CorelDRAW X7 (64-Bit) - Untitled-2</span>
        <div className="ml-auto flex items-center">
          <div className="flex h-[17px] w-[18px] items-end justify-center bg-[#e8e8e8]">
            <svg width="16" height="16" viewBox="0 0 14 14"><circle cx="7" cy="4" r="3" fill="#c9381a" /><path d="M1 14c0-4 3-4 4-5h4c1 1 4 1 4 5z" fill="#c9381a" /></svg>
          </div>
          <div className="ml-[30px] h-[2px] w-[13px] bg-[#999]" />
          <svg width="16" height="16" viewBox="0 0 16 16" className="ml-[19px]">
            <path d="M4.500 4.500V1.500h10v10h-3" fill="none" stroke="#888" />
            <rect x="1.500" y="4.500" width="10" height="10" fill="none" stroke="#888" />
          </svg>
          <svg width="16" height="16" viewBox="0 0 16 16" className="ml-[16px] mr-[12px]">
            <path d="M1 1l14 14M15 1L1 15" stroke="#888" strokeWidth="1.400" />
          </svg>
        </div>
      </div>

      {/* menu bar */}
      <div className="flex h-[25px] shrink-0 items-center bg-[#d7d7d7] pl-[11px] text-[13.3px] text-[#222]">
        {menus.map((m) => (
          <div key={m.u + m.b} className={`shrink-0 whitespace-nowrap ${m.w}`}>
            {m.a}
            <span className="underline">{m.u}</span>
            {m.b}
          </div>
        ))}
      </div>

      {/* standard toolbar */}
      <div className="flex h-[34px] shrink-0 items-center border-b border-[#e0e0e0] bg-[#f3f3f3] pt-px">
        <Grip />
        <NewDoc className="ml-[5px]" />
        <OpenIcon className="ml-[15px]" />
        <Tri className="ml-[9px]" />
        <SaveIcon className="ml-[14px]" />
        <PrintIcon className="ml-[12px]" />
        <Sep className="ml-[12px] h-[28px]" />
        <Scissors className="ml-[9px]" />
        <CopyIcon className="ml-[14px]" />
        <PasteIcon className="ml-[12px]" />
        <Sep className="ml-[12px] h-[28px]" />
        <UndoIcon className="ml-[10px]" />
        <Tri className="ml-[8px]" />
        <RedoIcon className="ml-[12px]" />
        <svg width="8" height="5" viewBox="0 0 8 5" className="ml-[10px] shrink-0"><path d="M0 0h8L4 5z" fill="#aaa" /></svg>
        <Sep className="ml-[13px] h-[28px]" />
        <CorelIcon className="ml-[9px]" />
        <Sep className="ml-[11px] h-[28px]" />
        <ImportIcon className="ml-[10px]" />
        <ExportIcon className="ml-[13px]" />
        <PdfIcon className="ml-[13px]" />
        <Sep className="ml-[11px] h-[28px]" />
        <div className="ml-[8px] flex h-[27px] w-[98px] shrink-0 items-center justify-between border border-[#8d8d8d] bg-white pl-[6px] pr-[6px] text-[13.3px] text-[#222]">
          25%
          <Chevron />
        </div>
        <FitIcon className="ml-[8px]" />
        <Sep className="ml-[12px] h-[28px]" />
        <div className="ml-[7px] flex h-[27px] w-[27px] shrink-0 items-center justify-center border border-[#9c9c9c] bg-white">
          <RulerIcon />
        </div>
        <GridEye className="ml-[9px]" />
        <div className="ml-[10px] flex h-[27px] w-[26px] shrink-0 items-center justify-center border border-[#9c9c9c] bg-white">
          <GuideEye />
        </div>
        <Sep className="ml-[8px] h-[28px]" />
        <span className="ml-[11px] w-[49px] shrink-0 whitespace-nowrap text-[13.3px] text-[#222]">Snap To</span>
        <Tri className="ml-[11px]" />
        <Sep className="ml-[13px] h-[28px]" />
        <OptionsIcon className="ml-[9px]" />
        <CheckList className="ml-[13px]" />
        <Sep className="ml-[11px] h-[28px]" />
        <PublishIcon className="ml-[9px]" />
        <Tri className="ml-[10px]" />
      </div>

      {/* property bar */}
      <div className="flex h-[47px] shrink-0 items-center border-b border-[#e0e0e0] bg-[#f3f3f3] pt-[3px]">
        <Grip />
        <GridNine className="ml-[8px]" />
        <div className="ml-[11px] w-[115px] shrink-0">
          <div className="flex h-[19px] items-center text-[13.3px]">
            <span className="w-[15px]">X:</span>
            <div className="flex h-[20px] w-[100px] items-center border border-[#8d8d8d] bg-white pl-[2px]">-295.917 mm</div>
          </div>
          <div className="flex h-[19px] items-center text-[13.3px]">
            <span className="w-[15px]">Y:</span>
            <div className="flex h-[20px] w-[100px] items-center border border-[#8d8d8d] bg-white pl-[2px]">252.52 mm</div>
          </div>
        </div>
        <Sep className="ml-[8px] h-[38px]" />
        <div className="ml-[7px] flex w-[20px] shrink-0 flex-col">
          <WidthIcon />
          <HeightIcon />
        </div>
        <div className="w-[100px] shrink-0 text-[13.3px]">
          <div className="flex h-[20px] items-center border border-[#8d8d8d] bg-white pl-[2px]">245.533 mm</div>
          <div className="mt-[-1px] flex h-[20px] items-center border border-[#8d8d8d] bg-white pl-[2px]">472.295 mm</div>
        </div>
        <div className="ml-[7px] w-[47px] shrink-0 text-[13.3px]">
          <div className="flex h-[20px] items-center border border-[#8d8d8d] bg-white pl-[3px]">100.0</div>
          <div className="mt-[-1px] flex h-[20px] items-center border border-[#8d8d8d] bg-white pl-[3px]">100.0</div>
        </div>
        <div className="ml-[3px] flex w-[14px] shrink-0 flex-col text-center text-[13.3px] leading-[19px] text-[#555]">
          <span>%</span>
          <span>%</span>
        </div>
        <LockIcon className="ml-[10px]" />
        <Sep className="ml-[7px] h-[38px]" />
        <RotateIcon className="ml-[8px]" />
        <div className="ml-[3px] flex h-[27px] w-[56px] shrink-0 items-center border border-[#8d8d8d] bg-white pl-[3px] text-[13.3px]">0.0</div>
        <span className="ml-[6px] mt-[-8px] w-[8px] shrink-0 text-[13.3px] text-[#666]">°</span>
        <MirrorH className="ml-[27px]" />
        <MirrorV className="ml-[13px]" />
        <Sep className="ml-[12px] h-[38px]" />
        <PenIcon className="ml-[7px]" />
        <div className="ml-[4px] flex h-[27px] w-[91px] shrink-0 items-center justify-end border border-[#8d8d8d] bg-white pr-[6px]">
          <Chevron />
        </div>
        <Sep className="ml-[7px] h-[38px]" />
        <RemoveClip className="ml-[9px]" />
        <RemoveInner className="ml-[13px]" />
        <Sep className="ml-[12px] h-[38px]" />
        <WrapIcon className="ml-[10px]" />
        <Sep className="ml-[11px] h-[38px]" />
        <OrderA className="ml-[10px]" />
        <OrderB className="ml-[13px]" />
        <Sep className="ml-[11px] h-[38px]" />
        <PlusCircle className="ml-[18px]" />
      </div>

      {/* workspace */}
      <div className="flex min-h-0 flex-1">
        <Toolbox />
        <div className="flex w-[1516px] shrink-0 flex-col">
          <div className="flex h-[23px] shrink-0 bg-[#e9e9e9]">
            {tabs.map((t) => (
              <div key={t.label} className={`flex shrink-0 items-center pl-[4px] pt-[3px] text-[13.3px] text-[#222] ${t.cls}`}>
                {t.label}
              </div>
            ))}
            <div className="ml-px flex w-[22px] shrink-0 items-center justify-center bg-[#d9d9d9]">
              <svg width="12" height="12" viewBox="0 0 12 12"><path d="M6 0v12M0 6h12" stroke="#bdbdbd" strokeWidth="2" /></svg>
            </div>
          </div>
          <div className="h-[2px] shrink-0 bg-[#5bbcf0]" />
          <TopRuler />
          <div className="flex h-[625px] shrink-0">
            <LeftRuler />
            <div className="flex min-w-0 flex-1 flex-col">
              <div className="flex h-[605px] shrink-0">
                <Canvas />
                <VScroll />
              </div>
              <NavRow />
            </div>
          </div>
          <PaletteStrip />
        </div>
        <div className="w-[4px] shrink-0 bg-white" />
        <Dockers />
        <Palette />
      </div>

      {/* status bar */}
      <div className="flex h-[38px] shrink-0 items-center border-t border-[#d9d9d9] bg-[#f3f3f3] text-[13.2px] text-[#333]">
        <span className="ml-[6px] w-[119px] shrink-0 whitespace-nowrap">( -397.946, -44.448 )</span>
        <div className="ml-[11px] flex h-[17px] w-[17px] shrink-0 items-center justify-center border-2 border-[#222] bg-white">
          <svg width="8" height="10" viewBox="0 0 8 10"><path d="M1 0v10l6-5z" fill="#000" /></svg>
        </div>
        <span className="ml-[32px] w-[182px] shrink-0 whitespace-nowrap">Group of 2 Objects on Layer 1</span>
        <Ico className="ml-[700px]" size={18}>
          <rect x="1" y="2" width="18" height="14" fill="#b9bdd2" stroke="#7d8098" />
          <circle cx="10" cy="9" r="4" fill="none" stroke="#333" />
          <path d="M6 9a4 4 0 0 1 4-4" fill="none" stroke="#d33" strokeWidth="1.500" />
          <path d="M5 18h10" stroke="#9a9a9a" strokeWidth="1.500" />
        </Ico>
        <Ico className="ml-[16px]">
          <path d="M10 2l7 8-7 7-7-7z" fill="#fff" stroke="#444" />
          <path d="M3 11h14l-7 7z" fill="#ee8a1a" />
        </Ico>
        <div className="ml-[6px] h-[21px] w-[21px] shrink-0 border border-[#aaa] bg-[#f1567a]" />
        <span className="ml-[4px] w-[91px] shrink-0 whitespace-nowrap">C0 M82 Y33 K0</span>
        <div className="ml-[98px] h-[26px] w-px shrink-0 bg-[#dcdcdc]" />
        <PenIcon className="ml-[4px]" />
        <div className="ml-[6px] h-[21px] w-[21px] shrink-0 border border-[#aaa] bg-[#231f20]" />
        <span className="ml-[4px] whitespace-nowrap">C:0 M:0 Y:0 K:100</span>
      </div>

      {/* taskbar */}
      <div className="flex h-[36px] shrink-0 items-center bg-[linear-gradient(100deg,#000_70%,#1e1e1e_85%,#111)] text-white">
        <svg width="20" height="20" viewBox="0 0 20 20" className="ml-[11px] shrink-0"><path d="M0 3l8-1v8H0zM9 2l11-2v10H9zM0 11h8v8l-8-1zM9 11h11v9L9 18z" fill="#fff" /></svg>
        <div className="ml-[23px] h-[17px] w-[17px] shrink-0 rounded-full border-2 border-white" />
        <svg width="24" height="16" viewBox="0 0 24 16" className="ml-[22px] shrink-0"><path d="M3 2H1v12h2M21 2h2v12h-2" fill="none" stroke="#fff" /><rect x="5" y="1" width="14" height="14" fill="none" stroke="#fff" /></svg>
        <div className="relative ml-[15px] flex h-[36px] w-[34px] shrink-0 items-center justify-center">
          <svg width="20" height="18" viewBox="0 0 20 18"><path d="M0 1h8l2 2h10v15H0z" fill="#f7c94e" /><path d="M6 9h8v9H6z" fill="#2ea0e8" /></svg>
          <div className="absolute bottom-0 h-[3px] w-full bg-[#6eb1e1]" />
        </div>
        <div className="relative ml-[11px] flex h-[36px] w-[33px] shrink-0 items-center justify-center">
          <svg width="19" height="19" viewBox="0 0 20 20">
            <circle cx="10" cy="10" r="9.500" fill="#d8352c" />
            <path d="M10 20a10 10 0 0 1-9-15l5 9h9z" fill="#2f9f46" />
            <path d="M10 20l5-7 4-7a10 10 0 0 1-9 14z" fill="#f7c62f" />
            <circle cx="10" cy="10" r="4.500" fill="#4a8af0" stroke="#fff" />
          </svg>
          <div className="absolute bottom-0 h-[3px] w-full bg-[#6eb1e1]" />
        </div>
        <div className="relative ml-[5px] flex h-[36px] w-[42px] shrink-0 items-center justify-center bg-[#3c3c3c]">
          <svg width="20" height="20" viewBox="0 0 20 20"><rect width="20" height="20" fill="#6fb33f" /><path d="M4 2l13 15-6-1L3 7zM10 2h3l4 9z" fill="#fff" /></svg>
          <div className="absolute bottom-0 h-[3px] w-full bg-[#6eb1e1]" />
        </div>
        <div className="relative ml-[6px] flex h-[36px] w-[33px] shrink-0 items-center justify-center">
          <svg width="18" height="18" viewBox="0 0 20 20"><circle cx="10" cy="10" r="8" fill="#2a2a4c" stroke="#8c83c9" /><path d="M5 14L14 4M8 15l7-8" stroke="#d8d8f0" /></svg>
          <div className="absolute bottom-0 h-[3px] w-full bg-[#6eb1e1]" />
        </div>
        <div className="relative ml-[10px] flex h-[36px] w-[33px] shrink-0 items-center justify-center">
          <svg width="20" height="20" viewBox="0 0 20 20"><circle cx="9" cy="8" r="7.500" fill="#e8dfd6" stroke="#d8563c" strokeWidth="2" /><path d="M9 3v5l4 2" stroke="#333" fill="none" /><path d="M12 12l5 6M17 12l-5 6" stroke="#2b7fc9" strokeWidth="1.500" /></svg>
          <div className="absolute bottom-0 h-[3px] w-full bg-[#6eb1e1]" />
        </div>
        <svg width="14" height="9" viewBox="0 0 14 9" className="ml-[973px] shrink-0"><path d="M1 8l6-6 6 6" fill="none" stroke="#ddd" strokeWidth="1.500" /></svg>
        <svg width="18" height="18" viewBox="0 0 20 20" className="ml-[11px] shrink-0"><circle cx="10" cy="9" r="8" fill="#2f7de0" /><path d="M2 9c3 5 8 7 16 6l-4 3C8 18 3 15 2 9z" fill="#35b04a" /><path d="M3 8c3 3 7 4 13 3l-2 2C9 13 5 12 3 8z" fill="#f3c72c" /></svg>
        <svg width="20" height="16" viewBox="0 0 20 16" className="ml-[9px] shrink-0"><rect x="4" y="5" width="15" height="9" fill="none" stroke="#ddd" /><rect x="6" y="7" width="11" height="5" fill="#ddd" /><path d="M4 1v4M8 1v4M2 5h8" stroke="#ddd" /></svg>
        <svg width="18" height="16" viewBox="0 0 18 16" className="ml-[12px] shrink-0"><path d="M1 9a12 12 0 0 1 13-6M4 12a8 8 0 0 1 9-5M7 15a4 4 0 0 1 6-4" fill="none" stroke="#ccc" /><rect x="13" y="11" width="4" height="4" fill="#ddd" /></svg>
        <svg width="18" height="16" viewBox="0 0 18 16" className="ml-[10px] shrink-0"><path d="M1 5h3l4-4v14l-4-4H1z" fill="none" stroke="#ddd" /><path d="M11 5a4 4 0 0 1 0 6M13 3a7 7 0 0 1 0 10" fill="none" stroke="#ddd" /></svg>
        <svg width="18" height="20" viewBox="0 0 18 20" className="ml-[9px] shrink-0"><path d="M0 1h18v14h-6l-3 4v-4H0z" fill="#fff" /><path d="M3 5h12M3 8h12M3 11h8" stroke="#222" /></svg>
        <span className="ml-[10px] w-[26px] shrink-0 text-[13.3px] text-[#ddd]">ENG</span>
        <span className="ml-[33px] shrink-0 text-[13.3px] text-[#ddd]">00:58</span>
        <div className="ml-[24px] h-[36px] w-px shrink-0 bg-[#555]" />
      </div>

      <EditFill />
    </div>
  );
}
